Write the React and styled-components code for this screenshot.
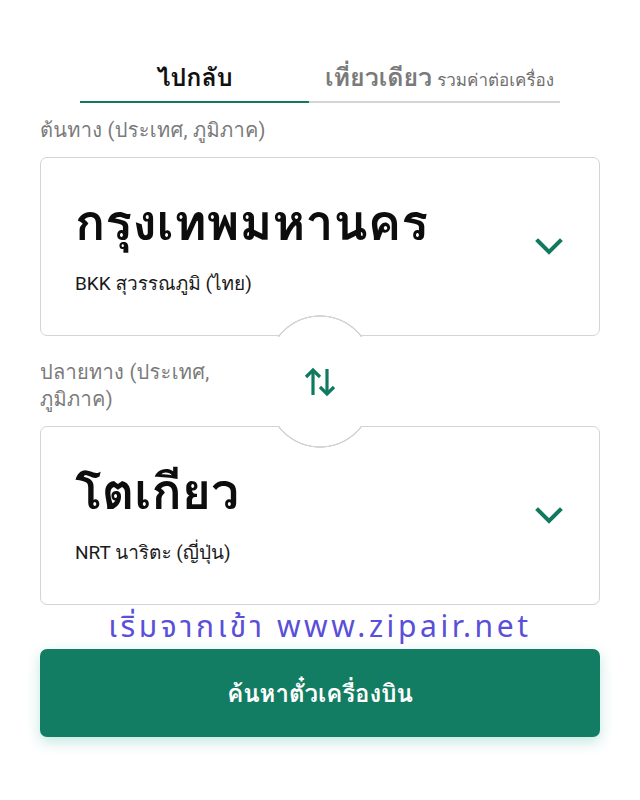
import React from 'react';
import styled, { createGlobalStyle } from 'styled-components';

const GREEN = '#11795d';
const LINE = '#d4d4d4';

const GlobalStyle = createGlobalStyle`
  body {
    margin: 0;
    background: #ffffff;
    font-family: Roboto, Loma, "Noto Sans", sans-serif;
    color: #111;
  }
`;

const ChevronDown = () => (
  <svg width="28" height="18" viewBox="0 0 28 18" fill="none">
    <path d="M3 3 L14 14 L25 3" stroke={GREEN} strokeWidth="4" strokeLinecap="square" />
  </svg>
);

const SwapIcon = () => (
  <svg width="34" height="30" viewBox="0 0 34 30" fill="none" stroke={GREEN} strokeWidth="3.2">
    <path d="M10 28 V3" />
    <path d="M3 10 L10 3 L17 10" />
    <path d="M24 2 V27" />
    <path d="M17 20 L24 27 L31 20" />
  </svg>
);

const App = () => {
  return (
    <Page>
      <GlobalStyle />
      <Tabs>
        <Tab $active>
          <TabTitle $active>ไปกลับ</TabTitle>
        </Tab>
        <Tab>
          <TabTitle>เที่ยวเดียว</TabTitle>
          <TabNote>รวมค่าต่อเครื่อง</TabNote>
        </Tab>
      </Tabs>

      <FieldLabel>ต้นทาง (ประเทศ, ภูมิภาค)</FieldLabel>
      <PlaceCard $notch="bottom">
        <PlaceInfo>
          <CityName>กรุงเทพมหานคร</CityName>
          <Airport>BKK สุวรรณภูมิ (ไทย)</Airport>
        </PlaceInfo>
        <ChevronDown />
      </PlaceCard>

      <MiddleRow>
        <FieldLabel $inline>ปลายทาง (ประเทศ, ภูมิภาค)</FieldLabel>
        <SwapButton aria-label="swap">
          <SwapIcon />
        </SwapButton>
        <span />
      </MiddleRow>

      <PlaceCard $notch="top">
        <PlaceInfo>
          <CityName>โตเกียว</CityName>
          <Airport>NRT นาริตะ (ญี่ปุ่น)</Airport>
        </PlaceInfo>
        <ChevronDown />
      </PlaceCard>

      <Annotation>เริ่มจากเข้า www.zipair.net</Annotation>

      <SearchButton>ค้นหาตั๋วเครื่องบิน</SearchButton>
    </Page>
  );
};

export default App;

const Page = styled.div`
  width: 640px;
  height: 800px;
  box-sizing: border-box;
  padding: 58px 40px 0;
  overflow: hidden;
`;

const Tabs = styled.div`
  display: grid;
  grid-template-columns: 229px 1fr;
  margin: 0 40px;
`;

const Tab = styled.div`
  display: flex;
  align-items: baseline;
  justify-content: center;
  gap: 5px;
  height: 45px;
  box-sizing: border-box;
  padding-left: ${p => (p.$active ? '0' : '10px')};
  border-bottom: 2px solid ${p => (p.$active ? GREEN : LINE)};
`;

const TabTitle = styled.span`
  font-size: 25px;
  font-weight: 700;
  line-height: 40px;
  color: ${p => (p.$active ? '#111' : '#7a7a7a')};
`;

const TabNote = styled.span`
  font-size: 17px;
  color: #6f6f6f;
`;

const FieldLabel = styled.div`
  margin-top: ${p => (p.$inline ? '-3px' : '14px')};
  font-size: 20px;
  line-height: 27px;
  color: #7a7a7a;
  letter-spacing: 0.3px;
`;

const notchBg = side => `radial-gradient(circle 53px at 50% ${
  side === 'bottom' ? 'calc(100% + 31px)' : '-31px'
}, #fff 51px, ${LINE} 51.5px, ${LINE} 52.5px, transparent 53px)`;

const PlaceCard = styled.div`
  position: relative;
  margin-top: ${p => (p.$notch === 'bottom' ? '13px' : '0')};
  height: 179px;
  box-sizing: border-box;
  border: 1.5px solid ${LINE};
  border-radius: 7px;
  display: flex;
  align-items: center;
  justify-content: space-between;
  padding: 0 36px 0 34px;

  &::after {
    content: '';
    position: absolute;
    left: 50%;
    width: 110px;
    height: 24px;
    margin-left: -55px;
    ${p => (p.$notch === 'bottom' ? 'bottom: -1.5px;' : 'top: -1.5px;')}
    background: ${p => notchBg(p.$notch)};
  }
`;

const PlaceInfo = styled.div`
  display: flex;
  flex-direction: column;
  gap: 15px;
  margin-bottom: 7px;
`;

const CityName = styled.div`
  font-size: 50px;
  font-weight: 700;
  line-height: 66px;
  color: #0d0d0d;
`;

const Airport = styled.div`
  font-size: 19px;
  line-height: 26px;
  color: #1a1a1a;
`;

const MiddleRow = styled.div`
  display: grid;
  grid-template-columns: 1fr auto 1fr;
  column-gap: 20px;
  align-items: start;
  height: 90px;
  padding-top: 26px;
  box-sizing: border-box;
`;

const SwapButton = styled.div`
  display: flex;
  align-items: center;
  justify-content: center;
  width: 40px;
  height: 30px;
  margin-top: 5px;
`;

const Annotation = styled.div`
  text-align: center;
  padding-top: 3px;
  font-family: "Noto Sans Thai", "Noto Sans", sans-serif;
  font-size: 30px;
  line-height: 41px;
  letter-spacing: 3.6px;
  color: #5a4fd8;
`;

const SearchButton = styled.button`
  display: block;
  width: 100%;
  height: 88px;
  border: none;
  border-radius: 7px;
  background: #137d63;
  color: #fff;
  font-family: inherit;
  font-size: 24px;
  font-weight: 700;
  box-shadow: 0 5px 14px rgba(40, 170, 140, 0.28);
`;
